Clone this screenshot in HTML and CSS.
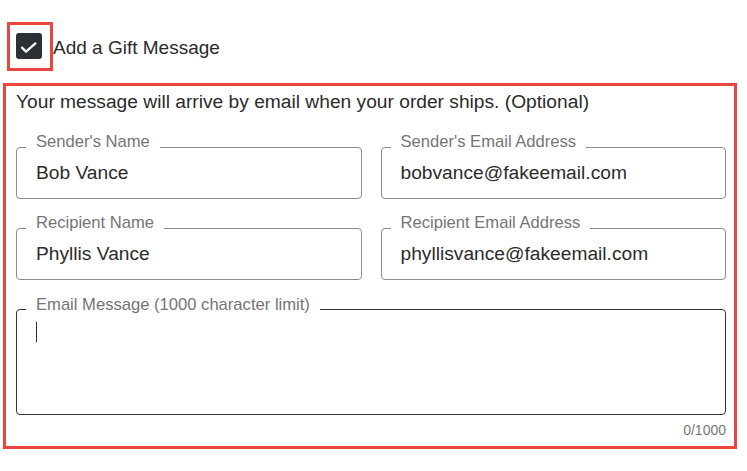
FILE: index.html
```html
<!DOCTYPE html>
<html lang="en">
<head>
<meta charset="utf-8">
<title>Gift Message</title>
<link rel="stylesheet" href="styles.css">
</head>
<body>
  <div class="gift-toggle">
    <span class="focus-ring">
      <span class="checkbox" role="checkbox" aria-checked="true">
        <svg width="26" height="26" viewBox="0 0 26 26" aria-hidden="true">
          <polyline points="6,14.6 10,18.6 19.4,10.4" fill="none" stroke="#ffffff" stroke-width="2.2" stroke-linecap="round" stroke-linejoin="round"/>
        </svg>
      </span>
    </span>
    <span class="toggle-text">Add a Gift Message</span>
  </div>

  <section class="gift-panel">
    <p class="intro">Your message will arrive by email when your order ships. (Optional)</p>
    <div class="grid">
      <div class="field">
        <span class="label">Sender's Name</span>
        <input class="value" type="text" value="Bob Vance">
      </div>
      <div class="field">
        <span class="label">Sender's Email Address</span>
        <input class="value" type="text" value="bobvance@fakeemail.com">
      </div>
      <div class="field">
        <span class="label">Recipient Name</span>
        <input class="value" type="text" value="Phyllis Vance">
      </div>
      <div class="field">
        <span class="label">Recipient Email Address</span>
        <input class="value" type="text" value="phyllisvance@fakeemail.com">
      </div>
      <div class="field field-area">
        <span class="label label-area">Email Message (1000 character limit)</span>
        <div class="area-body"><span class="caret"></span></div>
      </div>
    </div>
    <div class="counter">0/1000</div>
  </section>
</body>
</html>
```

FILE: styles.css
```css
* {
  box-sizing: border-box;
}

body {
  margin: 0;
  background: #ffffff;
  font-family: "Liberation Sans", Arial, sans-serif;
  color: #2b2b2b;
}

.gift-toggle {
  display: flex;
  align-items: center;
  margin: 22px 0 0 7px;
}

.focus-ring {
  display: flex;
  border: 3px solid #e8463f;
  padding: 8px 8px 9px 6px;
}

.checkbox {
  display: block;
  width: 26px;
  height: 26px;
  border-radius: 3px;
  background: #2c2f34;
}

.checkbox svg {
  display: block;
}

.toggle-text {
  font-size: 19px;
  line-height: 22px;
  padding-top: 2px;
}

.gift-panel {
  margin: 12px 0 0 3px;
  width: 734px;
  border: 3px solid #e8463f;
  padding: 5px 8px 8px 10px;
}

.intro {
  margin: 0 0 34px 0;
  font-size: 19.2px;
  line-height: 22px;
}

.grid {
  display: grid;
  grid-template-columns: 1fr 1fr;
  column-gap: 19px;
  row-gap: 29px;
}

.field {
  position: relative;
  height: 52px;
  border: 1px solid #8c8c8c;
  border-radius: 4px;
}

.label {
  position: absolute;
  top: -16px;
  left: 9px;
  padding: 0 10px;
  background: #ffffff;
  color: #757575;
  font-size: 16.6px;
  line-height: 19px;
  white-space: nowrap;
}

.value {
  display: block;
  width: 100%;
  height: 100%;
  border: 0;
  outline: none;
  background: transparent;
  padding: 0 19px;
  font: inherit;
  font-size: 19.2px;
  color: #2b2b2b;
}

.field-area {
  grid-column: 1 / -1;
  height: 106px;
  border-color: #333333;
}

.label-area {
  top: -15px;
}

.area-body {
  padding: 12px 19px 0;
}

.caret {
  display: block;
  width: 1px;
  height: 20px;
  background: #2b2b2b;
}

.counter {
  margin-top: 7px;
  text-align: right;
  font-size: 14px;
  line-height: 16px;
  color: #777777;
}
```
